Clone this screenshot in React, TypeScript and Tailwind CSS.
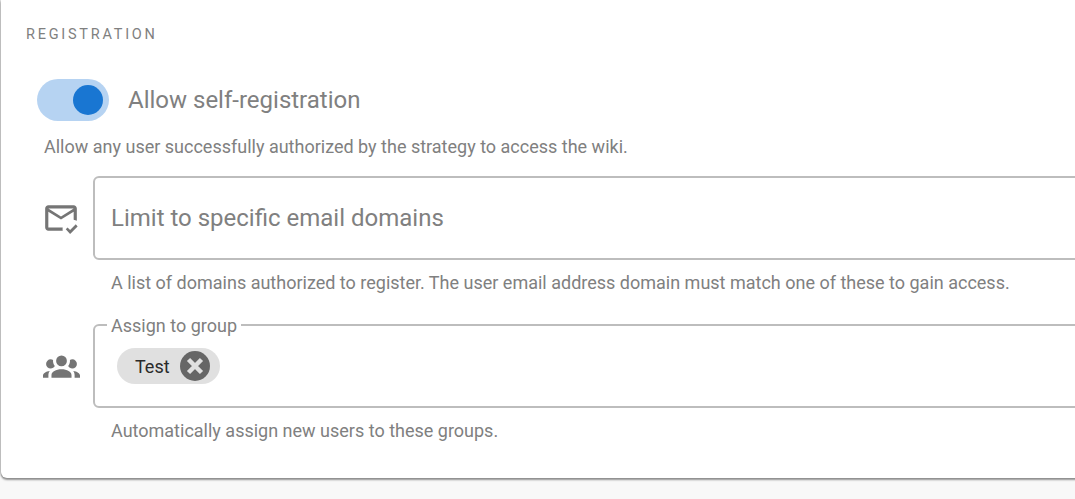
const roboto = "font-['Roboto',sans-serif]";

function MailCheck() {
  return (
    <svg viewBox="0 0 24 24" className="w-[38px] h-[38px]" fill="#757575">
      <path d="M13 19C13 18.66 13.04 18.33 13.09 18H4V8L12 13L20 8V13.09C20.72 13.21 21.39 13.46 22 13.81V6C22 4.9 21.1 4 20 4H4C2.9 4 2 4.9 2 6V18C2 19.1 2.9 20 4 20H13.09C13.04 19.67 13 19.34 13 19M20 6L12 11L4 6H20M17.75 22.16L15 19.16L16.16 18L17.75 19.59L21.34 16L22.5 17.41L17.75 22.16Z" />
    </svg>
  );
}

function Group() {
  return (
    <svg viewBox="0 0 24 24" className="w-[37px] h-[37px]" fill="#757575">
      <path d="M12,5.5A3.5,3.5 0 0,1 15.5,9A3.5,3.5 0 0,1 12,12.5A3.5,3.5 0 0,1 8.5,9A3.5,3.5 0 0,1 12,5.5M5,8C5.56,8 6.08,8.15 6.53,8.42C6.38,9.85 6.8,11.27 7.66,12.38C7.16,13.34 6.16,14 5,14A3,3 0 0,1 2,11A3,3 0 0,1 5,8M19,8A3,3 0 0,1 22,11A3,3 0 0,1 19,14C17.84,14 16.84,13.34 16.34,12.38C17.2,11.27 17.62,9.85 17.47,8.42C17.92,8.15 18.44,8 19,8M5.5,18.25C5.5,16.18 8.41,14.5 12,14.5C15.59,14.5 18.5,16.18 18.5,18.25V20H5.5V18.25M0,20V18.5C0,17.11 1.89,15.94 4.45,15.6C3.86,16.28 3.5,17.22 3.5,18.25V20H0M24,20H20.5V18.25C20.5,17.22 20.14,16.28 19.55,15.6C22.11,15.94 24,17.11 24,18.5V20Z" />
    </svg>
  );
}

export default function App() {
  return (
    <div className={`${roboto} w-[1075px] h-[499px] overflow-hidden bg-[#f8f8f8]`}>
      <div className="ml-px w-[1100px] h-[478px] bg-white rounded-bl-[6px] shadow-[0_2px_2px_rgba(0,0,0,0.4),-1px_0_2px_rgba(0,0,0,0.2)] pt-[27px] pl-[25px]">
        <div className="text-[14.5px] leading-[16px] tracking-[2.75px] text-[#808080]">REGISTRATION</div>

        <div className="mt-[36px] ml-[11px] flex items-center gap-[19px]">
          <div className="w-[72px] h-[42px] rounded-full bg-[#b6d3f2] flex items-center justify-end pr-[6px]">
            <div className="w-[30px] h-[30px] rounded-full bg-[#1976d2]" />
          </div>
          <span className="text-[24px] leading-[42px] text-[#808080]">Allow self-registration</span>
        </div>

        <div className="mt-[14px] ml-[18px] text-[18px] leading-[24px] text-[#808080]">
          Allow any user successfully authorized by the strategy to access the wiki.
        </div>

        <div className="mt-[17px] flex items-center">
          <div className="w-[67px] pl-[16px] flex items-center"><MailCheck /></div>
          <div className="w-[1000px] h-[84px] border-2 border-[#bdbdbd] rounded-[6px] flex items-center pl-[16px]">
            <span className="text-[24px] text-[#808080]">Limit to specific email domains</span>
          </div>
        </div>
        <div className="mt-[11px] ml-[85px] text-[18px] leading-[24px] text-[#808080]">
          A list of domains authorized to register. The user email address domain must match one of these to gain access.
        </div>

        <div className="mt-[29px] flex items-center">
          <div className="w-[67px] pl-[17px] flex items-center -translate-y-px"><Group /></div>
          <div className="relative w-[1000px] h-[84px] border-2 border-[#bdbdbd] rounded-[6px] flex items-start pl-[22px] pt-[22px]">
            <span className="absolute left-[12px] top-[-10px] bg-white px-[4px] text-[18px] leading-[20px] text-[#808080]">Assign to group</span>
            <div className="h-[36px] rounded-full bg-[#e0e0e0] flex items-center pl-[18px] pr-[10px] gap-[10px]">
              <span className="text-[18px] text-[#2a2a2a]">Test</span>
              <svg viewBox="0 0 30 30" className="w-[30px] h-[30px]">
                <circle cx="15" cy="15" r="15" fill="#666666" />
                <path d="M8.5 8.5L21.5 21.5M21.5 8.5L8.5 21.5" stroke="#e0e0e0" strokeWidth="4.5" />
              </svg>
            </div>
          </div>
        </div>
        <div className="mt-[11px] ml-[85px] text-[18px] leading-[24px] text-[#808080]">
          Automatically assign new users to these groups.
        </div>
      </div>
    </div>
  );
}
